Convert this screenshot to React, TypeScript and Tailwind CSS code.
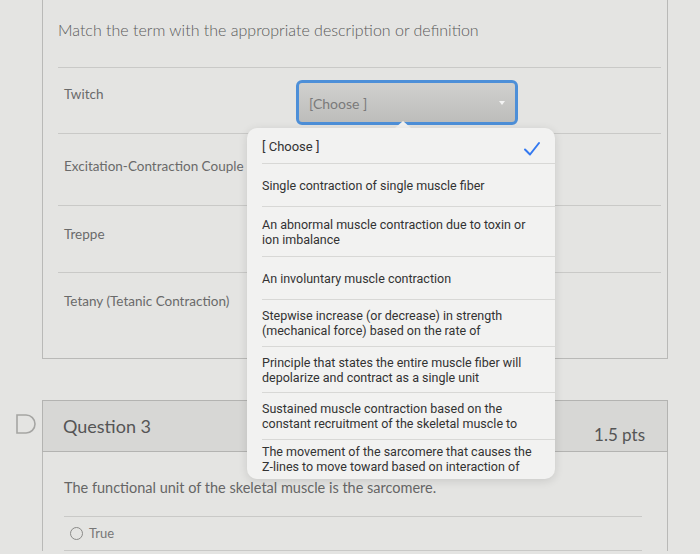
import React from "react";

const terms = [
  { label: "Twitch", h: "h-[66px]", pt: "pt-[17px]", select: true },
  { label: "Excitation-Contraction Couple", h: "h-[72px]", pt: "pt-[23px]" },
  { label: "Treppe", h: "h-[67px]", pt: "pt-[19px]" },
  { label: "Tetany (Tetanic Contraction)", h: "h-[85px]", pt: "pt-[19px]", last: true },
];

const options: { text: string[]; h: string }[] = [
  { text: ["Single contraction of single muscle fiber"], h: "h-[43px]" },
  { text: ["An abnormal muscle contraction due to toxin or", "ion imbalance"], h: "h-[50px]" },
  { text: ["An involuntary muscle contraction"], h: "h-[43px]" },
  { text: ["Stepwise increase (or decrease) in strength", "(mechanical force) based on the rate of"], h: "h-[47px]" },
  { text: ["Principle that states the entire muscle fiber will", "depolarize and contract as a single unit"], h: "h-[46px]" },
  { text: ["Sustained muscle contraction based on the", "constant recruitment of the skeletal muscle to"], h: "h-[47px]" },
  { text: ["The movement of the sarcomere that causes the", "Z-lines to move toward based on interaction of"], h: "h-[39px]" },
];

function SelectBox() {
  return (
    <div className="ml-[232px] mt-[-5px] w-[222px] h-[45px] rounded-[6px] border-[3px] border-[#4d8fd8] bg-gradient-to-b from-[#d0d0ce] to-[#bdbdbb] flex items-center pl-[10px] pr-[10px]">
      <span className="flex-1 text-[14px] text-[#7a7a7a] pt-[2px]">[Choose ]</span>
      <span className="w-0 h-0 border-l-[3px] border-r-[3px] border-t-[4px] border-l-transparent border-r-transparent border-t-[#f4f4f4]" />
    </div>
  );
}

function Dropdown() {
  return (
    <div className="absolute left-[247px] top-[121px] w-[308px] font-['Roboto',sans-serif] text-[#333]">
      <div className="ml-[148px] w-0 h-0 border-l-[8px] border-r-[8px] border-b-[7px] border-l-transparent border-r-transparent border-b-[#f2f2f1]" />
      <div className="rounded-[10px] bg-[#f2f2f1] shadow-[0_2px_10px_rgba(0,0,0,0.12)] pl-[15px]">
        <div className="h-[36px] flex items-center justify-between border-b border-[#d8d8d6] pr-[14px]">
          <span className="text-[13px] pt-[2px]">[ Choose ]</span>
          <svg width="18" height="16" viewBox="0 0 18 16" className="mt-[6px]">
            <path d="M2 8.5 L7 13.5 L16 2" fill="none" stroke="#3479f0" strokeWidth="2" strokeLinecap="round" strokeLinejoin="round" />
          </svg>
        </div>
        {options.map((o, i) => (
          <div
            key={i}
            className={`${o.h} flex flex-col justify-center text-[12.5px] leading-[15px] ${i < options.length - 1 ? "border-b border-[#d8d8d6]" : "pb-[2px]"}`}
          >
            {o.text.map((t) => (
              <span key={t}>{t}</span>
            ))}
          </div>
        ))}
      </div>
    </div>
  );
}

export default function App() {
  return (
    <div className="relative w-[700px] h-[554px] overflow-hidden bg-[#e4e4e2] font-['Lato',sans-serif] text-[#666]">
      {/* matching question panel */}
      <div className="ml-[42px] w-[626px] h-[359px] border-l border-r border-b border-[#b9b9b7] pl-[15px] pr-[6px]">
        <div className="h-[68px] border-b border-[#c9c9c7] pt-[19px]">
          <h2 className="text-[16px] leading-[22px] text-[#5a5a5a] font-light">
            Match the term with the appropriate description or definition
          </h2>
        </div>
        {terms.map((t) => (
          <div key={t.label} className={`${t.h} ${t.last ? "" : "border-b border-[#c9c9c7]"} ${t.pt} pl-[6px] flex`}>
            <span className="w-0 whitespace-nowrap text-[13.5px] leading-[18px] text-[#6a6a6a]">{t.label}</span>
            {t.select && <SelectBox />}
          </div>
        ))}
      </div>

      {/* question 3 */}
      <div className="mt-[41px] flex">
        <div className="w-[42px] pt-[13px] pl-[15px]">
          <svg width="22" height="22" viewBox="0 0 22 22">
            <path d="M2 2 H11 A9 9 0 0 1 11 20 H2 Z" fill="none" stroke="#a5a5a3" strokeWidth="1.6" />
          </svg>
        </div>
        <div className="w-[626px]">
          <div className="h-[52px] bg-[#d7d7d5] border border-[#b3b3b1] flex items-center justify-between pl-[20px] pr-[22px]">
            <span className="text-[18px] text-[#555]">Question 3</span>
            <span className="text-[17px] text-[#555] pt-[18px]">1.5 pts</span>
          </div>
          <div className="border-l border-r border-[#b9b9b7] pl-[21px] pr-[25px] pt-[26px]">
            <p className="text-[14.5px] leading-[20px] text-[#666] pb-[18px] border-b border-[#c9c9c7]">
              The functional unit of the skeletal muscle is the sarcomere.
            </p>
            <div className="h-[34px] flex items-center pl-[6px] gap-[6px] border-b border-[#c9c9c7]">
              <span className="w-[13px] h-[13px] rounded-full border-[1.5px] border-[#8a8a88]" />
              <span className="text-[13px] text-[#777]">True</span>
            </div>
          </div>
        </div>
      </div>

      <Dropdown />
    </div>
  );
}
